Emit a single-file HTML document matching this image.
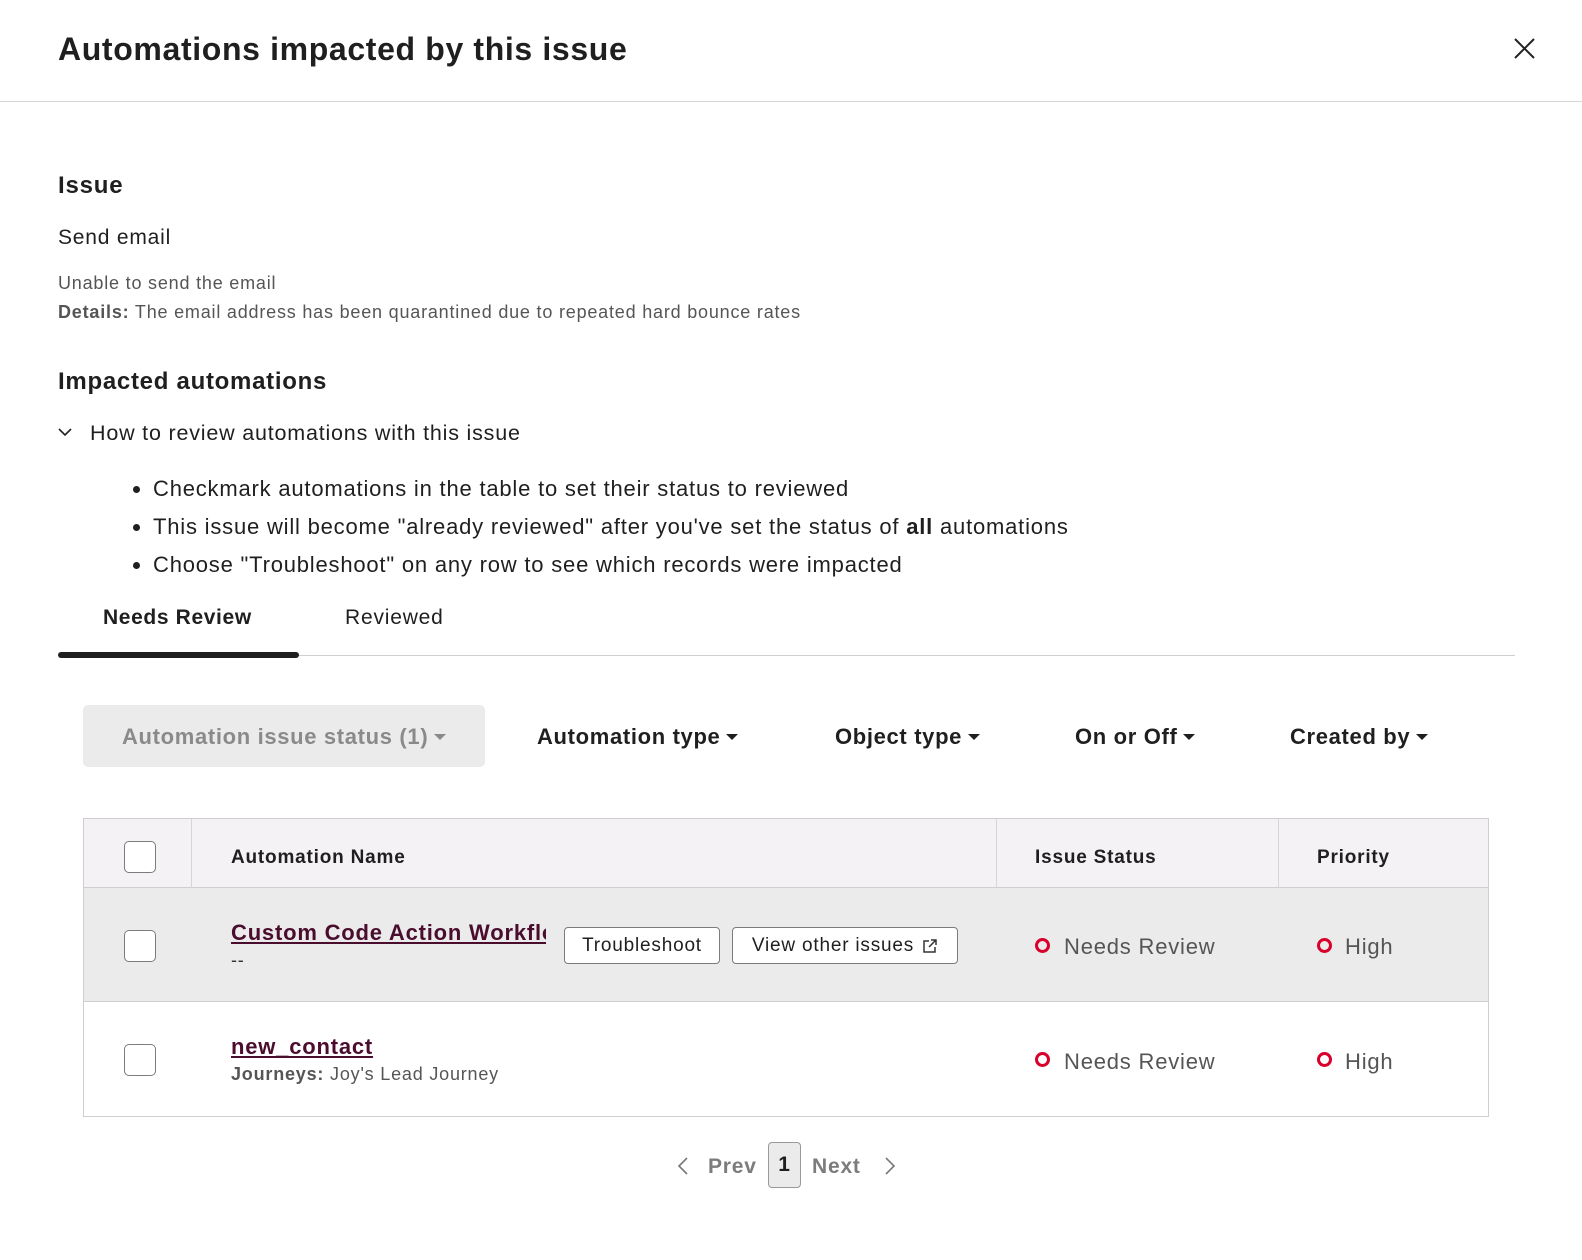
<!DOCTYPE html>
<html><head><meta charset="utf-8"><style>
*{box-sizing:border-box;margin:0;padding:0}
body{width:1582px;height:1260px;background:#fff;font-family:"Liberation Sans",sans-serif;color:#1f1f1f;position:relative;overflow:hidden;letter-spacing:0.05em}
.a{position:absolute;white-space:nowrap}
.cb{position:absolute;width:32px;height:32px;border:1.5px solid #7c7c7c;border-radius:5px;background:#fff}
.btn{position:absolute;height:37px;border:1px solid #7c7c7c;border-radius:4px;background:#fff;font-size:19px;display:flex;align-items:center;justify-content:center}
.dot{position:absolute;width:15px;height:15px;border:3px solid #d9002b;border-radius:50%}
.car{display:inline-block;border-left:6px solid transparent;border-right:6px solid transparent;border-top:6px solid currentColor;vertical-align:middle;margin-left:6px;margin-bottom:3px}
.f{font-size:22px;font-weight:bold;top:724px;letter-spacing:0.03em}
</style></head><body>
<div class="a" style="left:58px;top:31px;font-size:32px;font-weight:bold;letter-spacing:0.02em">Automations impacted by this issue</div>
<svg class="a" style="left:1513px;top:37px" width="23" height="23"><path d="M2 2L21 21M21 2L2 21" stroke="#222" stroke-width="2"/></svg>
<div class="a" style="left:0;top:101px;width:1582px;height:1px;background:#d6d6d6"></div>
<div class="a" style="left:58px;top:172px;font-size:24px;font-weight:bold">Issue</div>
<div class="a" style="left:58px;top:226px;font-size:21px">Send email</div>
<div class="a" style="left:58px;top:273px;font-size:18px;color:#555">Unable to send the email</div>
<div class="a" style="left:58px;top:302px;font-size:18px;color:#555"><b>Details:</b> The email address has been quarantined due to repeated hard bounce rates</div>
<div class="a" style="left:58px;top:368px;font-size:24px;font-weight:bold;letter-spacing:0.03em">Impacted automations</div>
<svg class="a" style="left:58px;top:427px" width="14" height="10"><path d="M1 2L7 8L13 2" stroke="#222" stroke-width="1.6" fill="none"/></svg>
<div class="a" style="left:90px;top:421px;font-size:21.5px">How to review automations with this issue</div>
<ul class="a" style="left:153px;top:470px;font-size:22px;line-height:38px">
<li>Checkmark automations in the table to set their status to reviewed</li>
<li>This issue will become "already reviewed" after you've set the status of <b>all</b> automations</li>
<li>Choose "Troubleshoot" on any row to see which records were impacted</li></ul>
<div class="a" style="left:103px;top:606px;font-size:21px;font-weight:bold;letter-spacing:0.03em">Needs Review</div>
<div class="a" style="left:345px;top:606px;font-size:21px">Reviewed</div>
<div class="a" style="left:58px;top:655px;width:1457px;height:1px;background:#cfcfcf"></div>
<div class="a" style="left:58px;top:652px;width:241px;height:6px;border-radius:3px;background:#1f1f1f"></div>
<div class="a" style="left:83px;top:705px;width:402px;height:62px;background:#ebebeb;border-radius:5px"></div>
<div class="a f" style="left:122px;color:#8a8a8a">Automation issue status (1)<span class="car"></span></div>
<div class="a f" style="left:537px">Automation type<span class="car"></span></div>
<div class="a f" style="left:835px">Object type<span class="car"></span></div>
<div class="a f" style="left:1075px">On or Off<span class="car"></span></div>
<div class="a f" style="left:1290px">Created by<span class="car"></span></div>
<div class="a" style="left:83px;top:818px;width:1406px;height:299px;border:1px solid #cfcfcf"></div>
<div class="a" style="left:84px;top:819px;width:1404px;height:69px;background:#f5f2f6;border-bottom:1px solid #cfcfcf"></div>
<div class="a" style="left:84px;top:888px;width:1404px;height:114px;background:#ebebeb;border-bottom:1px solid #cfcfcf"></div>
<div class="a" style="left:191px;top:819px;width:1px;height:69px;background:#d6d6d6"></div>
<div class="a" style="left:996px;top:819px;width:1px;height:69px;background:#d6d6d6"></div>
<div class="a" style="left:1278px;top:819px;width:1px;height:69px;background:#d6d6d6"></div>
<div class="cb" style="left:124px;top:841px"></div>
<div class="cb" style="left:124px;top:930px"></div>
<div class="cb" style="left:124px;top:1044px"></div>
<div class="a" style="left:231px;top:847px;font-size:19px;font-weight:bold">Automation Name</div>
<div class="a" style="left:1035px;top:847px;font-size:19px;font-weight:bold">Issue Status</div>
<div class="a" style="left:1317px;top:847px;font-size:19px;font-weight:bold">Priority</div>
<div class="a" style="left:231px;top:920px;width:315px;overflow:hidden;font-size:22px;font-weight:bold;color:#4a0d2e;text-decoration:underline">Custom Code Action Workflow</div>
<div class="a" style="left:231px;top:950px;font-size:18px;color:#333">--</div>
<div class="btn a" style="left:564px;top:927px;width:156px">Troubleshoot</div>
<div class="btn a" style="left:732px;top:927px;width:226px">View other issues <svg style="margin-left:8px" width="16" height="16"><path d="M7 3H2v11h11V9M9 2h5v5M14 2L7 9" stroke="#333" stroke-width="1.5" fill="none"/></svg></div>
<div class="dot" style="left:1035px;top:938px"></div>
<div class="a" style="left:1064px;top:934px;font-size:22px;color:#555">Needs Review</div>
<div class="dot" style="left:1317px;top:938px"></div>
<div class="a" style="left:1345px;top:934px;font-size:22px;color:#555">High</div>
<div class="a" style="left:231px;top:1034px;font-size:22px;font-weight:bold;color:#4a0d2e;text-decoration:underline">new_contact</div>
<div class="a" style="left:231px;top:1064px;font-size:18px;color:#555"><b>Journeys:</b> Joy's Lead Journey</div>
<div class="dot" style="left:1035px;top:1052px"></div>
<div class="a" style="left:1064px;top:1049px;font-size:22px;color:#555">Needs Review</div>
<div class="dot" style="left:1317px;top:1052px"></div>
<div class="a" style="left:1345px;top:1049px;font-size:22px;color:#555">High</div>
<svg class="a" style="left:677px;top:1156px" width="12" height="20"><path d="M10 2L2 10L10 18" stroke="#777" stroke-width="1.6" fill="none"/></svg>
<div class="a" style="left:708px;top:1155px;font-size:21px;font-weight:bold;color:#7c7c7c">Prev</div>
<div class="a" style="left:768px;top:1142px;width:33px;height:46px;border:1px solid #999;border-radius:4px;background:#ebebeb;font-size:21px;font-weight:bold;text-align:center;line-height:44px">1</div>
<div class="a" style="left:812px;top:1155px;font-size:21px;font-weight:bold;color:#7c7c7c">Next</div>
<svg class="a" style="left:884px;top:1156px" width="12" height="20"><path d="M2 2L10 10L2 18" stroke="#777" stroke-width="1.6" fill="none"/></svg>
</body></html>
